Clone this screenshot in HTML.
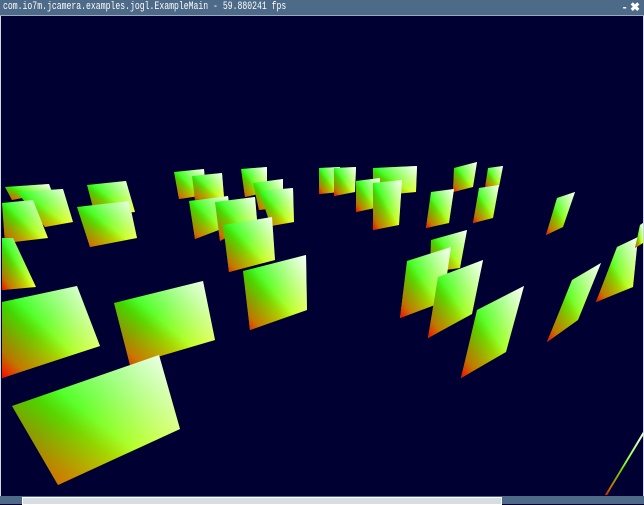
<!DOCTYPE html>
<html><head><style>
html,body{margin:0;padding:0;width:644px;height:504px;overflow:hidden;background:#000033}
.t{position:absolute;left:0;top:0;width:644px;height:16px;background:#4d6a88;border-bottom:1px solid #9ab;box-sizing:border-box;color:#fff;overflow:hidden}
.t span.x{position:absolute;left:3px;top:0;font:11px "Liberation Mono",monospace;line-height:15px;transform:scaleX(0.74);transform-origin:0 0;white-space:nowrap}
.f{position:absolute;left:0;top:16px;width:644px;height:488px;border:1px solid #cfd8e0;border-top:none;box-sizing:border-box}
.b{position:absolute;left:0;top:496px;width:644px;height:8px;background:#4d6a88}
.b i{position:absolute;left:22px;top:1px;width:478px;height:6px;background:#d8dde2;border:1px solid #fff}
</style></head><body>
<div class="t"><span class="x">com.io7m.jcamera.examples.jogl.ExampleMain - 59.880241 fps</span><span style="position:absolute;right:4px;top:0;font:bold 12px 'Liberation Sans',sans-serif;line-height:15px">- ✖</span></div>
<div class="f"></div>
<svg id="s" style="position:absolute;left:0;top:0" width="644" height="504">
<defs>
<linearGradient id="g0" x1="0" y1="0" x2="1" y2="1"><stop offset="0" stop-color="#00ff00"/><stop offset="0.4" stop-color="#40ff00"/><stop offset="1" stop-color="#ffff00"/></linearGradient>
<linearGradient id="g1" x1="1" y1="0" x2="0.4" y2="0.6"><stop offset="0" stop-color="#ffffff"/><stop offset="1" stop-color="#ffffff" stop-opacity="0"/></linearGradient>
<linearGradient id="g2" x1="0" y1="1" x2="0.5" y2="0.5"><stop offset="0" stop-color="#ff0000"/><stop offset="0.3" stop-color="#ff2000" stop-opacity="0.6"/><stop offset="1" stop-color="#ff0000" stop-opacity="0"/></linearGradient>
</defs>
<g id="q"></g>
</svg>
<div class="b"><i></i></div>
<script>
var P=[
"5,187 49,184 52,192 12,200",
"17,192 63,189 73,222 45,227",
"87,185 126,181 135,212 95,215",
"174,172 204,169 206,195 179,199",
"192,176 222,173 224,197 195,200",
"241,169 267,167 267,192 245,197",
"253,183 283,179 283,207 259,210",
"2,203 33,200 48,238 5,243",
"77,207 129,201 137,238 90,247",
"189,201 228,196 232,225 195,239",
"215,202 255,197 257,220 220,241",
"259,191 293,188 294,222 271,226",
"223,225 272,217 275,260 229,272",
"2,238 13,238 36,287 2,290",
"2,302 77,286 100,346 2,378",
"114,303 203,281 215,340 130,365",
"243,271 306,255 307,310 250,330",
"12,406 159,355 180,429 58,485",
"319,168 340,167 340,192 319,194",
"334,168 356,167 355,192 334,196",
"373,168 417,166 416,192 373,196",
"356,181 380,178 380,207 356,212",
"373,183 402,180 399,225 373,230",
"454,168 477,162 473,187 453,192",
"488,168 503,166 499,187 485,188",
"431,192 454,189 449,223 426,228",
"479,188 499,185 493,218 473,223",
"557,198 575,192 563,227 546,235",
"431,240 467,230 460,268 430,272",
"407,261 451,247 443,302 400,318",
"438,277 483,260 472,314 428,338",
"477,310 524,286 506,352 461,378",
"572,280 601,263 578,320 547,342",
"617,247 638,237 633,287 596,302",
"640,225 643,223 643,243 635,248",
"643,432 644,434 607,495 605,495"];
var g=document.getElementById('q'),ns="http://www.w3.org/2000/svg";
P.forEach(function(p){["g0","g1","g2"].forEach(function(id){var e=document.createElementNS(ns,"polygon");e.setAttribute("points",p);e.setAttribute("fill","url(#"+id+")");g.appendChild(e);});});
</script>
</body></html>
